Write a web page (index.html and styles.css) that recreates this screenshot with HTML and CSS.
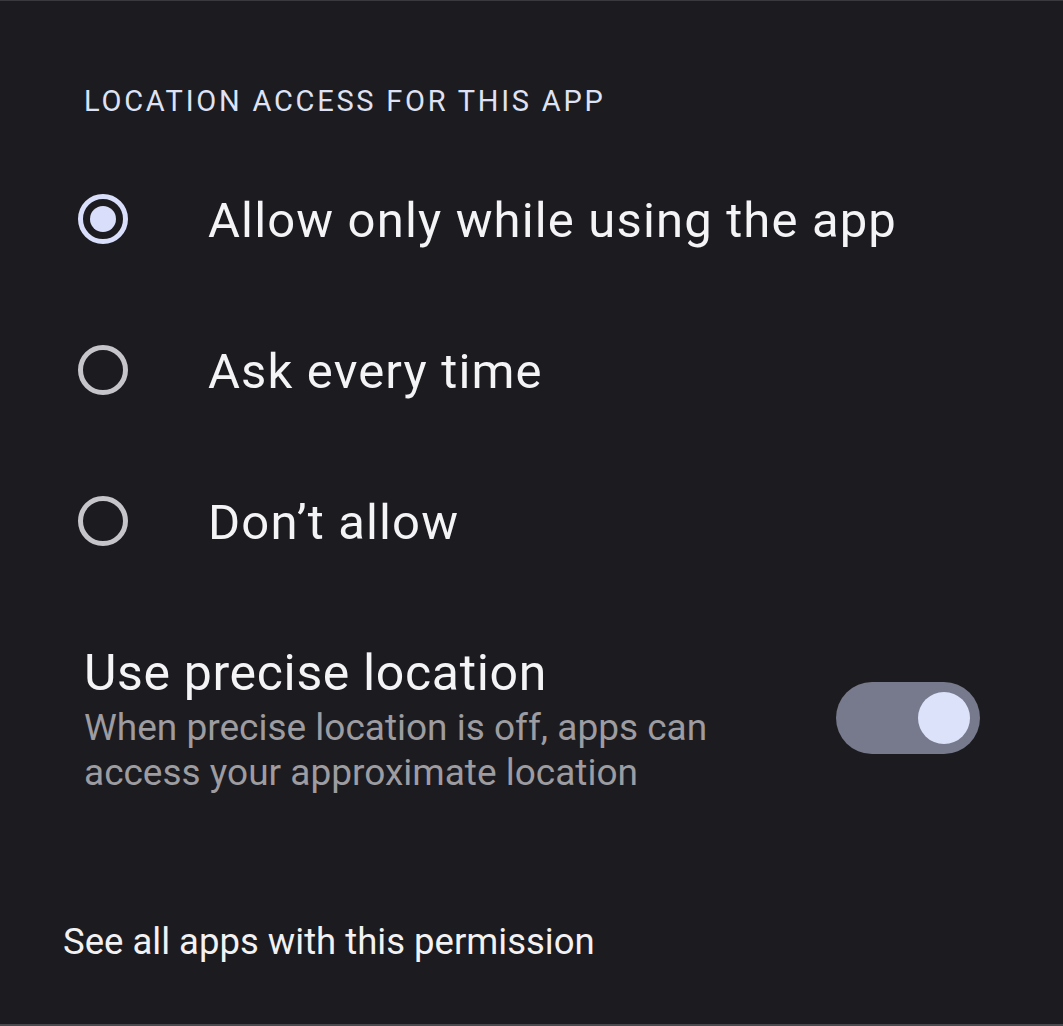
FILE: index.html
```html
<!DOCTYPE html>
<html lang="en">
<head>
    <meta charset="UTF-8">
    <meta name="viewport" content="width=device-width, initial-scale=1.0">
    <title>Location permission</title>
    <link rel="stylesheet" href="styles.css">
</head>
<body>
    <div class="screen">
        <h2 class="section-title">LOCATION ACCESS FOR THIS APP</h2>

        <div class="options">
            <label class="option">
                <span class="radio checked"><span class="dot"></span></span>
                <span class="option-text">Allow only while using the app</span>
            </label>
            <label class="option">
                <span class="radio"></span>
                <span class="option-text">Ask every time</span>
            </label>
            <label class="option">
                <span class="radio"></span>
                <span class="option-text">Don’t allow</span>
            </label>
        </div>

        <div class="precise">
            <div class="precise-text">
                <div class="precise-title">Use precise location</div>
                <div class="precise-desc">When precise location is off, apps can<br>access your approximate location</div>
            </div>
            <div class="switch on"><span class="thumb"></span></div>
        </div>

        <a class="see-all" href="#">See all apps with this permission</a>
    </div>
</body>
</html>
```

FILE: styles.css
```css
html, body {
    margin: 0;
    padding: 0;
    background-color: #1c1b1f;
}

body {
    font-family: Roboto, "Noto Sans", Arial, sans-serif;
    color: #f2f1f4;
}

.screen {
    width: 1063px;
    height: 1026px;
    box-sizing: border-box;
    border-top: 1px solid #3a3a3e;
    border-bottom: 2px solid #4a4a4e;
    overflow: hidden;
}

.section-title {
    margin: 80px 0 0 84px;
    font-size: 29px;
    line-height: 40px;
    font-weight: 400;
    letter-spacing: 2.75px;
    color: #dfe2f4;
}

.options {
    margin-top: 22px;
}

.option {
    display: flex;
    align-items: center;
    height: 151px;
    padding-left: 78px;
}

.radio {
    width: 50px;
    height: 50px;
    box-sizing: border-box;
    border: 5px solid #c6c6ca;
    border-radius: 50%;
    display: flex;
    align-items: center;
    justify-content: center;
    flex-shrink: 0;
}

.radio.checked {
    border-color: #d9defa;
}

.radio .dot {
    width: 26px;
    height: 26px;
    border-radius: 50%;
    background-color: #d9defa;
}

.option-text {
    margin: 4px 0 0 80px;
    font-size: 49px;
    letter-spacing: 1.15px;
    color: #f4f3f6;
}

.precise {
    display: flex;
    align-items: center;
    justify-content: space-between;
    margin-top: 48px;
    padding: 0 83px 0 84px;
}

.precise-title {
    font-size: 50px;
    line-height: 58px;
    letter-spacing: 0.65px;
    color: #f4f3f6;
}

.precise-desc {
    margin-top: 3px;
    font-size: 37px;
    line-height: 45px;
    color: #9d9ca1;
}

.switch {
    width: 144px;
    height: 72px;
    border-radius: 36px;
    background-color: #777a8c;
    display: flex;
    align-items: center;
    justify-content: flex-end;
    padding: 0 10px;
    box-sizing: border-box;
    margin-top: -3px;
}

.switch .thumb {
    width: 52px;
    height: 52px;
    border-radius: 50%;
    background-color: #dde2fb;
}

.see-all {
    display: block;
    margin: 123px 0 0 63px;
    font-size: 36.5px;
    line-height: 48px;
    color: #f2f1f4;
    text-decoration: none;
}
```
